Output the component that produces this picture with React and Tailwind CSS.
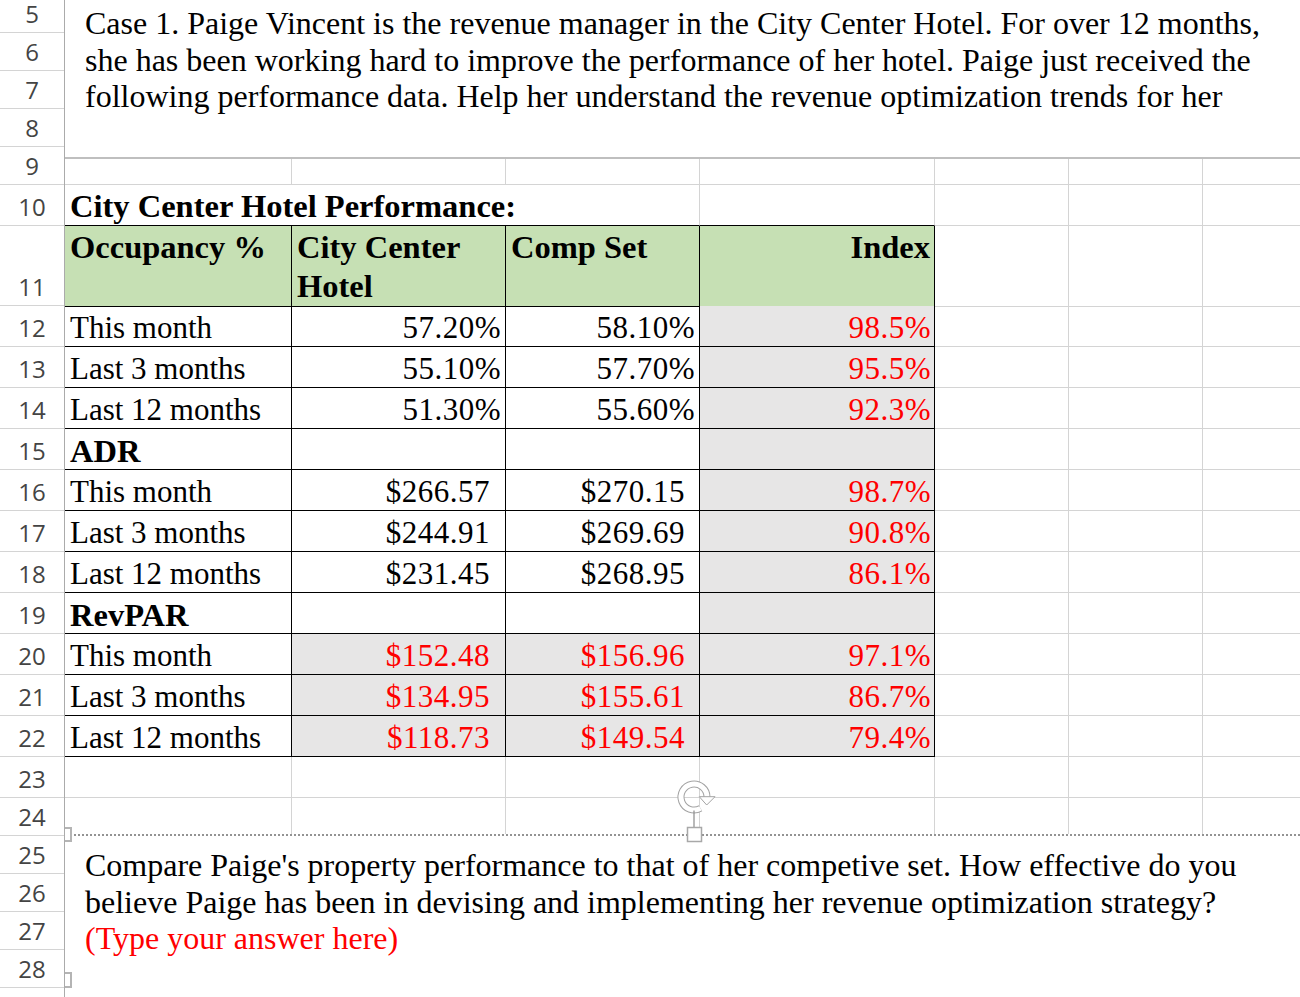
import React from "react";

const serif = { fontFamily: '"Liberation Serif", "Times New Roman", serif' };

const headerRows = [
  ["5", 33], ["6", 38], ["7", 38], ["8", 38], ["9", 38], ["10", 41], ["11", 80],
  ["12", 41], ["13", 41], ["14", 41], ["15", 41], ["16", 41], ["17", 41], ["18", 41],
  ["19", 41], ["20", 41], ["21", 41], ["22", 41], ["23", 41],
  ["24", 38], ["25", 38], ["26", 38], ["27", 38], ["28", 38],
];

const tableRows = [
  { label: "This month", b: "57.20%", c: "58.10%", d: "98.5%", kind: "pct" },
  { label: "Last 3 months", b: "55.10%", c: "57.70%", d: "95.5%", kind: "pct" },
  { label: "Last 12 months", b: "51.30%", c: "55.60%", d: "92.3%", kind: "pct" },
  { label: "ADR", kind: "section" },
  { label: "This month", b: "$266.57", c: "$270.15", d: "98.7%", kind: "adr" },
  { label: "Last 3 months", b: "$244.91", c: "$269.69", d: "90.8%", kind: "adr" },
  { label: "Last 12 months", b: "$231.45", c: "$268.95", d: "86.1%", kind: "adr" },
  { label: "RevPAR", kind: "section" },
  { label: "This month", b: "$152.48", c: "$156.96", d: "97.1%", kind: "rev" },
  { label: "Last 3 months", b: "$134.95", c: "$155.61", d: "86.7%", kind: "rev" },
  { label: "Last 12 months", b: "$118.73", c: "$149.54", d: "79.4%", kind: "rev" },
];

const cols = "grid grid-cols-[227px_214px_194px_235px_134px_134px_134px]";

function EmptyTail() {
  return (
    <>
      <div className="border-r border-b border-[#d4d4d4]" />
      <div className="border-r border-b border-[#d4d4d4]" />
      <div className="border-r border-b border-[#d4d4d4]" />
    </>
  );
}

function GridRow({ h, last }) {
  const b = last ? "border-r border-[#d4d4d4]" : "border-r border-b border-[#d4d4d4]";
  return (
    <div className={`${cols} ${h}`}>
      {[0, 1, 2, 3, 4, 5, 6].map((i) => (
        <div key={i} className={b} />
      ))}
    </div>
  );
}

function DataRow({ row }) {
  const cell = "border-r border-b border-black flex items-end pb-[1px] leading-[34px] text-[31px] whitespace-nowrap";
  if (row.kind === "section") {
    return (
      <div className={`${cols} h-[41px]`}>
        <div className={`${cell} pl-[5px] font-bold text-[32.5px]`}>{row.label}</div>
        <div className={cell} />
        <div className={cell} />
        <div className={`${cell} bg-[#e7e6e6]`} />
        <EmptyTail />
      </div>
    );
  }
  const money = row.kind !== "pct";
  const rev = row.kind === "rev";
  return (
    <div className={`${cols} h-[41px]`}>
      <div className={`${cell} pl-[5px]`}>{row.label}</div>
      <div
        className={`${cell} justify-end tracking-[0.5px] ${money ? "pr-[15px]" : "pr-[4px]"} ${
          rev ? "bg-[#e7e6e6] text-[#ff0000]" : "text-black"
        }`}
      >
        {row.b}
      </div>
      <div
        className={`${cell} justify-end tracking-[0.5px] ${money ? "pr-[14px]" : "pr-[4px]"} ${
          rev ? "bg-[#e7e6e6] text-[#ff0000]" : "text-black"
        }`}
      >
        {row.c}
      </div>
      <div className={`${cell} justify-end tracking-[0.5px] pr-[3px] bg-[#e7e6e6] text-[#ff0000]`}>{row.d}</div>
      <EmptyTail />
    </div>
  );
}

function RotateHandle() {
  return (
    <svg
      className="absolute left-[672px] top-[778px]"
      width="44"
      height="66"
      viewBox="0 0 44 66"
    >
      <path d="M35 19 A13 13 0 1 0 28.5 30.3" fill="none" stroke="#a3a3a3" strokeWidth="7" />
      <path d="M35 19 A13 13 0 1 0 28.5 30.3" fill="none" stroke="#ffffff" strokeWidth="5" />
      <polygon points="27.3,18.7 43,18.7 34.7,27" fill="#ffffff" stroke="#a3a3a3" strokeWidth="1" />
      <line x1="22" y1="32.5" x2="22" y2="49" stroke="#8a8a8a" strokeWidth="1.2" />
      <rect x="15.5" y="49.5" width="14" height="14" fill="#ffffff" stroke="#a8a8a8" strokeWidth="1.5" />
    </svg>
  );
}

export default function App() {
  return (
    <div className="relative w-[1300px] h-[997px] overflow-hidden bg-white flex" style={serif}>
      {/* row numbers */}
      <div className="w-[65px] shrink-0 border-r border-[#ababab] flex flex-col">
        {headerRows.map(([n, h]) => (
          <div
            key={n}
            style={{ height: h }}
            className="border-b border-[#d4d4d4] flex items-end justify-center pb-[4px] text-[24px] leading-[28px] text-[#444444] font-['Open_Sans',sans-serif]"
          >
            {n}
          </div>
        ))}
        <div className="flex-1" />
      </div>

      {/* sheet */}
      <div className="flex-1 flex flex-col min-w-0 overflow-hidden text-black">
        {/* case text box */}
        <div className="h-[159px] shrink-0 border-b-2 border-[#bfbfbf] pl-[20px] pt-[5px] text-[32px] leading-[36.7px] whitespace-nowrap">
          <div>Case 1. Paige Vincent is the revenue manager in the City Center Hotel. For over 12 months,</div>
          <div>she has been working hard to improve the performance of her hotel. Paige just received the</div>
          <div>following performance data. Help her understand the revenue optimization trends for her</div>
        </div>

        {/* row 9 */}
        <GridRow h="h-[26px]" />

        {/* row 10 */}
        <div className={`${cols} h-[41px]`}>
          <div className="col-span-3 border-r border-[#d4d4d4] border-b border-b-black flex items-end pl-[5px] pb-[2px] text-[32.5px] leading-[34px] font-bold whitespace-nowrap">
            City Center Hotel Performance:
          </div>
          <div className="border-r border-[#d4d4d4] border-b border-b-black" />
          <EmptyTail />
        </div>

        {/* row 11 header */}
        <div className={`${cols} h-[80px]`}>
          <div className="bg-[#c6e0b4] border-r border-b border-black pl-[5px] pt-[2px] text-[32.5px] leading-[39px] font-bold whitespace-nowrap">
            Occupancy %
          </div>
          <div className="bg-[#c6e0b4] border-r border-b border-black pl-[5px] pt-[2px] text-[32.5px] leading-[39px] font-bold whitespace-nowrap">
            City Center
            <br />
            Hotel
          </div>
          <div className="bg-[#c6e0b4] border-r border-b border-black pl-[5px] pt-[2px] text-[32.5px] leading-[39px] font-bold whitespace-nowrap">
            Comp Set
          </div>
          <div className="bg-[#c6e0b4] border-r border-b border-black pr-[4px] pt-[2px] text-right text-[32.5px] leading-[39px] font-bold">
            Index
          </div>
          <EmptyTail />
        </div>

        {tableRows.map((row, i) => (
          <DataRow key={i} row={row} />
        ))}

        {/* rows 23, 24 */}
        <GridRow h="h-[41px]" />
        <GridRow h="h-[36px]" last />

        {/* answer text box */}
        <div className="flex-1 border-t-2 border-dotted border-[#939393] pl-[20px] pt-[11px] text-[32px] leading-[36.5px] whitespace-nowrap">
          <div>Compare Paige's property performance to that of her competive set. How effective do you</div>
          <div>believe Paige has been in devising and implementing her revenue optimization strategy?</div>
          <div className="text-[#ff0000]">(Type your answer here)</div>
        </div>
      </div>

      {/* selection handles */}
      <RotateHandle />
      <div className="absolute left-[65px] top-[827px] w-[7px] h-[15px] bg-white border-2 border-l-0 border-[#b4b4b4]" />
      <div className="absolute left-[65px] top-[972px] w-[7px] h-[16px] bg-white border-2 border-l-0 border-[#b4b4b4]" />
    </div>
  );
}
